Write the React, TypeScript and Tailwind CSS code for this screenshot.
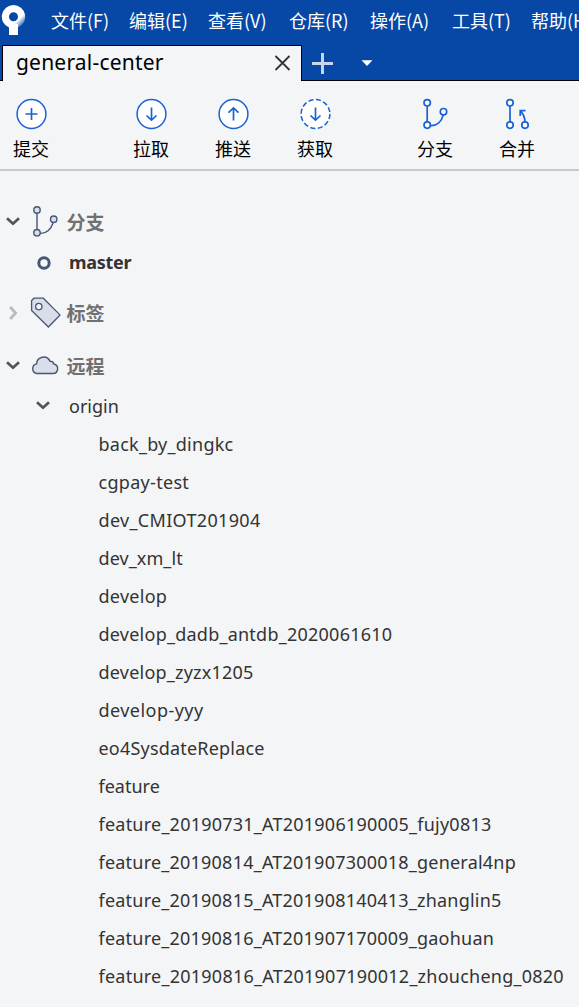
import { type ReactNode } from 'react';
import clsx from 'clsx';

/* ============================================================
   Repository window: menu bar, tab strip, toolbar, ref tree
   ============================================================ */

const MENUS = [
    { label: '文件(F)', width: 'w-[78px]' },
    { label: '编辑(E)', width: 'w-[79px]' },
    { label: '查看(V)', width: 'w-[81px]' },
    { label: '仓库(R)', width: 'w-[81px]' },
    { label: '操作(A)', width: 'w-[82px]' },
    { label: '工具(T)', width: 'w-[79px]' },
    { label: '帮助(H)', width: 'w-[82px]' },
];

const REMOTE_BRANCHES = [
    { name: 'back_by_dingkc', tracking: 'tracking-[0.25px]' },
    { name: 'cgpay-test', tracking: 'tracking-[0.3px]' },
    { name: 'dev_CMIOT201904', tracking: 'tracking-[0.33px]' },
    { name: 'dev_xm_lt', tracking: 'tracking-[0.08px]' },
    { name: 'develop', tracking: 'tracking-[0.28px]' },
    { name: 'develop_dadb_antdb_2020061610', tracking: 'tracking-[0.24px]' },
    { name: 'develop_zyzx1205', tracking: 'tracking-[0.22px]' },
    { name: 'develop-yyy', tracking: 'tracking-[0.45px]' },
    { name: 'eo4SysdateReplace', tracking: 'tracking-[0.2px]' },
    { name: 'feature', tracking: 'tracking-[0px]' },
    { name: 'feature_20190731_AT201906190005_fujy0813', tracking: 'tracking-[0.23px]' },
    { name: 'feature_20190814_AT201907300018_general4np', tracking: 'tracking-[0.22px]' },
    { name: 'feature_20190815_AT201908140413_zhanglin5', tracking: 'tracking-[0.22px]' },
    { name: 'feature_20190816_AT201907170009_gaohuan', tracking: 'tracking-[0.22px]' },
    { name: 'feature_20190816_AT201907190012_zhoucheng_0820', tracking: 'tracking-[0.24px]' },
];

function Logo() {
    return (
        <svg width="26" height="36" viewBox="0 0 26 36" fill="none">
            <defs>
                <linearGradient id="logo-fade" x1="17.500" y1="20.500" x2="22.500" y2="25.500" gradientUnits="userSpaceOnUse">
                    <stop stopColor="#fff" />
                    <stop offset="1" stopColor="#fff" stopOpacity="0.15" />
                </linearGradient>
            </defs>
            <path
                fillRule="evenodd"
                d="M13.500 5a11.700 11.700 0 0 0-4.500 22.500h9A11.700 11.700 0 0 0 13.500 5Zm0 7.200a4.500 4.500 0 1 1 0 9 4.500 4.500 0 0 1 0-9Z"
                fill="url(#logo-fade)"
            />
            <path d="M9 24h9v11H9z" fill="#fff" />
        </svg>
    );
}

function CircleIcon({ d, dashed }: { d: string; dashed?: boolean }) {
    return (
        <svg width="32" height="32" viewBox="0 0 32 32" fill="none" stroke="#1a62d6" strokeWidth="1.5">
            <circle cx="16.5" cy="16" r="14.4" fill="#fff" strokeDasharray={dashed ? '5.040 2.500' : undefined} />
            <path d={d} strokeWidth="1.7" />
        </svg>
    );
}

function BranchIcon() {
    return (
        <svg width="32" height="32" viewBox="0 0 32 32" fill="none" stroke="#1a62d6" strokeWidth="1.7">
            <path d="M8.200 7.5v17M11.300 27.500C17.500 28 22.500 24 24.200 17" />
            <g fill="#fff">
                <circle cx="8.200" cy="4.800" r="3.200" />
                <circle cx="8.200" cy="27.100" r="3.200" />
                <circle cx="24.500" cy="13.700" r="3.200" />
            </g>
        </svg>
    );
}

function MergeIcon() {
    return (
        <svg width="32" height="32" viewBox="0 0 32 32" fill="none" stroke="#1a62d6" strokeWidth="1.7">
            <path d="M9 7.500v17M24 24C23.800 19.500 22.300 16 19.500 13.200M19.200 18v-5.400h5.300" />
            <g fill="#fff">
                <circle cx="9" cy="4.800" r="3.200" />
                <circle cx="9" cy="27.100" r="3.200" />
                <circle cx="24" cy="27.100" r="3.200" />
            </g>
        </svg>
    );
}

function TreeBranchIcon() {
    return (
        <svg width="32" height="34" viewBox="0 0 32 34" fill="none" stroke="#475674" strokeWidth="1.4">
            <path d="M8 7.500v17.500M11 28.300C17 29 22 24.500 24.300 17.500" />
            <g fill="#d9dee9">
                <circle cx="8" cy="5" r="3.200" />
                <circle cx="8" cy="27.700" r="3.200" />
                <circle cx="24.700" cy="14.200" r="3.200" />
            </g>
        </svg>
    );
}

function TagIcon() {
    return (
        <svg width="32" height="32" viewBox="0 0 32 32" fill="#d9dee9" stroke="#475674" strokeWidth="1.3">
            <path d="M5 1.200H14.300L31 17.900 19.400 30 2.600 13.500V3.600Z" />
            <circle cx="9.800" cy="9.600" r="3.200" fill="#f3f5f7" />
        </svg>
    );
}

function CloudIcon() {
    return (
        <svg width="32" height="24" viewBox="0 0 32 24" fill="#d9dee9" stroke="#475674" strokeWidth="1.400">
            <path d="M7.700 19.500H24a4.800 4.800 0 0 0 .8-9.500 3.800 3.800 0 0 0-3.800-2.700 7 7 0 0 0-13.400 2.600A4.900 4.900 0 0 0 7.700 19.500Z" />
        </svg>
    );
}

function Chevron({ open }: { open: boolean }) {
    return (
        <svg
            width="16"
            height="16"
            viewBox="0 0 16 16"
            fill="none"
            strokeWidth="2.800"
            className={clsx('shrink-0', open ? 'stroke-[#555]' : 'stroke-[#bbb]')}
        >
            <path d={open ? 'M2 4.300 8 9.700l6-5.400' : 'M5.200 2 10.600 8l-5.400 6'} />
        </svg>
    );
}

interface ToolButtonProps {
    label: string;
    icon: ReactNode;
    className?: string;
}

function ToolButton({ label, icon, className = 'w-[82px]' }: ToolButtonProps) {
    return (
        <button className={clsx('flex shrink-0 flex-col items-center pt-[17px]', className)}>
            {icon}
            <span className="mt-[6px] text-[18px] leading-[26px] text-black">{label}</span>
        </button>
    );
}

interface SectionProps {
    label: string;
    icon: ReactNode;
    open: boolean;
    className?: string;
}

function Section({ label, icon, open, className }: SectionProps) {
    return (
        <div className={clsx('flex h-10 items-center pl-[5px]', className)}>
            <Chevron open={open} />
            <span className="ml-2 flex w-[37.5px] shrink-0">{icon}</span>
            <span className="pt-px text-[19px] leading-6 font-bold text-[#707070]">{label}</span>
        </div>
    );
}

export default function App() {
    return (
        <div className="h-[1007px] w-[579px] overflow-hidden bg-[#f3f5f7] font-['Noto_Sans','Noto_Sans_CJK_SC',sans-serif] text-[#333]">
            <header className="flex h-[81px] flex-col bg-[#0747a6]">
                <nav className="flex h-[45px] shrink-0 overflow-hidden text-white">
                    <div className="w-[51px] shrink-0">
                        <Logo />
                    </div>
                    {MENUS.map((menu) => (
                        <span
                            key={menu.label}
                            className={clsx("shrink-0 pt-[7px] font-['Noto_Sans_CJK_SC',sans-serif] text-[18px] leading-[26px] whitespace-nowrap", menu.width)}
                        >
                            {menu.label}
                        </span>
                    ))}
                </nav>
                <div className="flex h-9 shrink-0">
                    <div className="w-[2px] border-b border-black" />
                    <div className="flex w-[300px] items-start justify-between border-x border-t border-black bg-[#f3f5f7] pr-2 pl-[13px]">
                        <span className="pt-[2px] text-[21px] leading-[28px] tracking-[0.2px] text-black">general-center</span>
                        <svg width="20" height="20" viewBox="0 0 20 20" stroke="#333" strokeWidth="1.800" className="mt-[7px]">
                            <path d="m2.500 3 14 14M16.500 3l-14 14" />
                        </svg>
                    </div>
                    <div className="flex flex-1 border-b border-black">
                        <svg width="80" height="35" viewBox="0 0 80 35">
                            <path d="M10 18.500h21M20.500 8v21" stroke="#c8d5ec" strokeWidth="3" />
                            <path d="M59.500 15.200h11l-5.500 5.800Z" fill="#fff" />
                        </svg>
                    </div>
                </div>
            </header>

            <div className="flex h-[90px] border-b-2 border-[#c9cacd]">
                <ToolButton label="提交" icon={<CircleIcon d="M10.500 16h12M16.500 10v12" />} className="w-[62px]" />
                <div className="w-12 shrink-0" />
                <ToolButton label="拉取" icon={<CircleIcon d="M16.500 9.500v12.500M11.500 17.500l5 4.700 5-4.700" />} />
                <ToolButton label="推送" icon={<CircleIcon d="M16.500 22.500V10M11.500 14.700l5-4.700 5 4.700" />} />
                <ToolButton label="获取" icon={<CircleIcon dashed d="M16.500 9.500v12.500M11.500 17.500l5 4.700 5-4.700" />} />
                <div className="w-[38px] shrink-0" />
                <ToolButton label="分支" icon={<BranchIcon />} />
                <ToolButton label="合并" icon={<MergeIcon />} />
            </div>

            <main className="pt-[31px]">
                <Section label="分支" icon={<TreeBranchIcon />} open />
                <div className="flex h-10 items-center pl-[37px]">
                    <svg width="14" height="14" viewBox="0 0 14 14" fill="none" stroke="#475674" strokeWidth="3" className="mt-[2px]">
                        <circle cx="7" cy="7" r="5.200" />
                    </svg>
                    <span className="ml-[18px] text-[18px] leading-6 font-bold tracking-[-0.3px]">master</span>
                </div>
                <Section label="标签" icon={<TagIcon />} open={false} className="mt-[11px]" />
                <Section label="远程" icon={<CloudIcon />} open className="mt-[13px]" />
                <div className="flex h-10 items-center pl-[35px]">
                    <Chevron open />
                    <span className="ml-[18px] text-[18px] leading-6">origin</span>
                </div>
                <ul className="-mt-px pl-[98.500px]">
                    {REMOTE_BRANCHES.map((branch) => (
                        <li key={branch.name} className="flex h-[38px] items-center text-[18px] whitespace-nowrap">
                            <span className={branch.tracking}>{branch.name}</span>
                        </li>
                    ))}
                </ul>
            </main>
        </div>
    );
}
